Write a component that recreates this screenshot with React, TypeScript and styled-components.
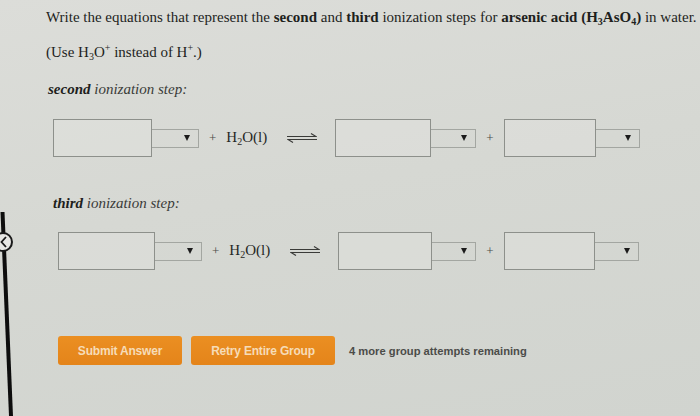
import React from "react";
import styled, { createGlobalStyle } from "styled-components";

const GlobalStyle = createGlobalStyle`
  html, body {
    margin: 0;
    padding: 0;
    width: 700px;
    height: 416px;
    overflow: hidden;
  }
`;

const Page = styled.div`
  position: relative;
  width: 700px;
  height: 416px;
  box-sizing: border-box;
  padding: 7px 0 0 46px;
  display: flex;
  flex-direction: column;
  background: linear-gradient(170deg, #dcddd9 0%, #d6d8d3 45%, #d1d4cf 100%);
  color: #1e1f1d;
  font-family: "Liberation Serif", "Times New Roman", serif;
`;

const Prompt = styled.p`
  margin: 0;
  font-size: 15px;
  line-height: 20px;
  white-space: nowrap;
`;

const Note = styled(Prompt)`
  margin-top: 15px;
`;

const StepLabel = styled.div<{ $indent: number; $top: number }>`
  margin: ${({ $top }) => $top}px 0 0 ${({ $indent }) => $indent}px;
  font-size: 15px;
  line-height: 20px;
  font-style: italic;
  color: #3a3b39;

  b {
    color: #1e1f1d;
  }
`;

const Equation = styled.div<{ $indent: number; $top: number }>`
  display: flex;
  align-items: center;
  margin: ${({ $top }) => $top}px 0 0 ${({ $indent }) => $indent}px;
  height: 40px;
`;

const Species = styled.div`
  display: flex;
  align-items: center;
`;

const FormulaBox = styled.div<{ $w: number }>`
  width: ${({ $w }) => $w}px;
  height: 38px;
  box-sizing: border-box;
  border: 1.5px solid #8d908b;
  background: rgba(228, 229, 225, 0.35);
`;

const StateSelect = styled.div<{ $w: number }>`
  width: ${({ $w }) => $w}px;
  height: 19px;
  box-sizing: border-box;
  border: 1px solid #a3a6a1;
  border-left: none;
  display: flex;
  align-items: center;
  justify-content: flex-end;
  padding-right: 8px;
`;

const Caret = styled.span`
  width: 0;
  height: 0;
  border-left: 3px solid transparent;
  border-right: 3px solid transparent;
  border-top: 6px solid #1b1b1b;
`;

const Plus = styled.span<{ $gap: number }>`
  margin: 0 ${({ $gap }) => $gap}px;
  font-size: 13px;
  color: #4a4b48;
`;

const Water = styled.span`
  font-size: 15px;
  color: #262725;

  sub {
    font-size: 10px;
    vertical-align: -3px;
  }
`;

const Arrow = styled.svg`
  margin: 0 18px 0 20px;
  flex-shrink: 0;
`;

const Actions = styled.div`
  display: flex;
  align-items: center;
  gap: 9px;
  margin: 65px 0 0 12px;
  font-family: "Liberation Sans", Arial, sans-serif;
`;

const OrangeButton = styled.button<{ $w: number }>`
  width: ${({ $w }) => $w}px;
  height: 29px;
  border: none;
  border-radius: 3px;
  background: linear-gradient(#eb8f22, #e4841a);
  color: #f6dcb8;
  font-family: inherit;
  font-weight: bold;
  font-size: 12px;
  letter-spacing: -0.2px;
  padding: 0;
`;

const Remaining = styled.span`
  margin-left: 5px;
  font-size: 11.2px;
  font-weight: bold;
  color: #4b4c49;
`;

const Edge = styled.svg`
  position: absolute;
  left: 0;
  top: 0;
  pointer-events: none;
`;

const Sup = styled.sup`
  font-size: 10px;
  vertical-align: 6px;
  line-height: 0;
`;

const Sub = styled.sub`
  font-size: 10px;
  vertical-align: -3px;
  line-height: 0;
`;

const EquilibriumArrow = () => (
  <Arrow width="30" height="10" viewBox="0 0 30 10">
    <path d="M0 3.5 H29 L24 0.5" fill="none" stroke="#3a3b38" strokeWidth="1.2" />
    <path d="M30 6.5 H1 L6 9.5" fill="none" stroke="#3a3b38" strokeWidth="1.2" />
  </Arrow>
);

const Slot = ({ box, select }: { box: number; select: number }) => (
  <Species>
    <FormulaBox $w={box} />
    <StateSelect $w={select}>
      <Caret />
    </StateSelect>
  </Species>
);

interface StepProps {
  indent: number;
  top: number;
  sizes: [number, number][];
}

const StepEquation = ({ indent, top, sizes }: StepProps) => (
  <Equation $indent={indent} $top={top}>
    <Slot box={sizes[0][0]} select={sizes[0][1]} />
    <Plus $gap={10}>+</Plus>
    <Water>
      H<sub>2</sub>O(l)
    </Water>
    <EquilibriumArrow />
    <Slot box={sizes[1][0]} select={sizes[1][1]} />
    <Plus $gap={10}>+</Plus>
    <Slot box={sizes[2][0]} select={sizes[2][1]} />
  </Equation>
);

export default function App() {
  return (
    <>
      <GlobalStyle />
      <Page>
        <Prompt>
          Write the equations that represent the <b>second</b> and <b>third</b> ionization steps
          for <b>arsenic acid</b>{" "}
          <b>
            (H<Sub>3</Sub>AsO<Sub>4</Sub>)
          </b>{" "}
          in water.
        </Prompt>
        <Note>
          (Use H<Sub>3</Sub>O<Sup>+</Sup> instead of H<Sup>+</Sup>.)
        </Note>

        <StepLabel $indent={2} $top={17}>
          <b>second</b> ionization step:
        </StepLabel>
        <StepEquation
          indent={7}
          top={19}
          sizes={[
            [99, 47],
            [96, 45],
            [92, 44],
          ]}
        />

        <StepLabel $indent={7} $top={35}>
          <b>third</b> ionization step:
        </StepLabel>
        <StepEquation
          indent={12}
          top={18}
          sizes={[
            [97, 47],
            [94, 44],
            [91, 44],
          ]}
        />

        <Actions>
          <OrangeButton $w={124}>Submit Answer</OrangeButton>
          <OrangeButton $w={144}>Retry Entire Group</OrangeButton>
          <Remaining>4 more group attempts remaining</Remaining>
        </Actions>

        {/* monitor bezel and the collapsed side-panel tab on the left */}
        <Edge width="30" height="416" viewBox="0 0 30 416">
          <path d="M2.5 212 L11 416" stroke="#0d0d0d" strokeWidth="4" />
          <circle cx="3" cy="242" r="9" fill="#e7e7e4" stroke="#1a1a1a" strokeWidth="2" />
          <path d="M6 237 L1.5 242 L6 247" fill="none" stroke="#1a1a1a" strokeWidth="1.8" />
        </Edge>
      </Page>
    </>
  );
}
